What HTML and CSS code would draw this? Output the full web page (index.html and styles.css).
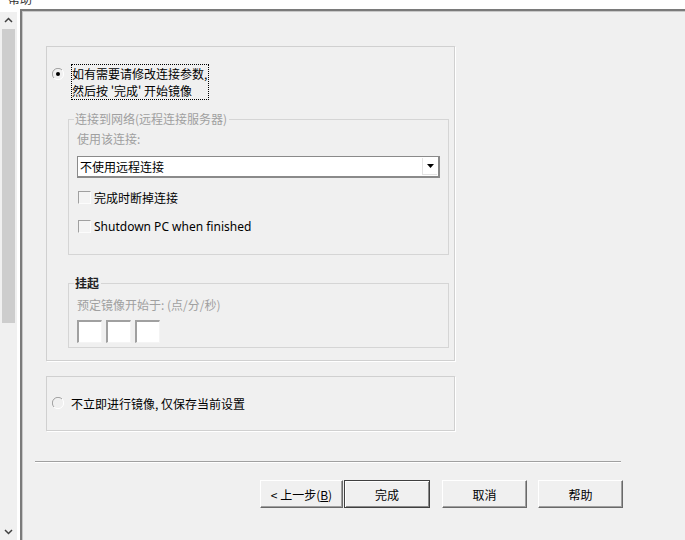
FILE: index.html
```html
<!DOCTYPE html>
<html lang="zh-CN">
<head>
    <meta charset="UTF-8">
    <title>帮助</title>
    <link rel="stylesheet" href="styles.css">
</head>
<body>
    <div class="header"><span class="header-title">帮助</span></div>

    <div class="main">
        <div class="scrollbar">
            <div class="scroll-arrow">
                <svg width="9" height="6" viewBox="0 0 9 6"><path d="M1 5 L4.5 1.5 L8 5" fill="none" stroke="#404040" stroke-width="1.5"/></svg>
            </div>
            <div class="scroll-track">
                <div class="scroll-thumb"></div>
            </div>
            <div class="scroll-arrow">
                <svg width="9" height="6" viewBox="0 0 9 6"><path d="M1 1 L4.5 4.5 L8 1" fill="none" stroke="#404040" stroke-width="1.5"/></svg>
            </div>
        </div>

        <div class="panel">
            <div class="group group-main">
                <div class="option-row">
                    <svg class="radio" width="12" height="12" viewBox="0 0 12 12">
                        <path d="M10 2 A5.5 5.5 0 0 0 2 10" fill="none" stroke="#a0a0a0" stroke-width="1"/>
                        <path d="M2 10 A5.5 5.5 0 0 0 10 2" fill="none" stroke="#ffffff" stroke-width="1"/>
                        <circle cx="6" cy="6" r="2" fill="#000"/>
                    </svg>
                    <div class="focus-label">如有需要请修改连接参数,<br>然后按 '完成' 开始镜像</div>
                </div>

                <fieldset class="subgroup net-group">
                    <legend class="legend-disabled">连接到网络(远程连接服务器)</legend>
                    <div class="field-label">使用该连接:</div>
                    <div class="combo">
                        <span class="combo-text">不使用远程连接</span>
                        <span class="combo-btn">
                            <svg width="7" height="4" viewBox="0 0 7 4"><path d="M0 0 H7 L3.5 4 Z" fill="#000"/></svg>
                        </span>
                    </div>
                    <div class="check-row first">
                        <span class="checkbox"></span>
                        <span>完成时断掉连接</span>
                    </div>
                    <div class="check-row">
                        <span class="checkbox"></span>
                        <span class="latin">Shutdown PC when finished</span>
                    </div>
                </fieldset>

                <fieldset class="subgroup hold-group">
                    <legend class="legend-bold">挂起</legend>
                    <div class="field-label">预定镜像开始于: (点/分/秒)</div>
                    <div class="time-boxes">
                        <span class="time-box"></span>
                        <span class="time-box"></span>
                        <span class="time-box"></span>
                    </div>
                </fieldset>
            </div>

            <div class="group group-save">
                <svg class="radio" width="12" height="12" viewBox="0 0 12 12">
                    <path d="M10 2 A5.5 5.5 0 0 0 2 10" fill="none" stroke="#a0a0a0" stroke-width="1"/>
                    <path d="M2 10 A5.5 5.5 0 0 0 10 2" fill="none" stroke="#ffffff" stroke-width="1"/>
                </svg>
                <span>不立即进行镜像, 仅保存当前设置</span>
            </div>

            <div class="separator"></div>

            <div class="buttons">
                <button class="btn btn-back">&lt;&nbsp;上一步(<u>B</u>)</button>
                <button class="btn btn-default">完成</button>
                <button class="btn btn-cancel">取消</button>
                <button class="btn btn-help">帮助</button>
            </div>
        </div>
    </div>
</body>
</html>
```

FILE: styles.css
```css
* {
    margin: 0;
    padding: 0;
    box-sizing: border-box;
}

body {
    width: 685px;
    height: 540px;
    overflow: hidden;
    background-color: #ffffff;
    color: #000;
    font-family: "Noto Sans CJK SC", "Noto Sans", sans-serif;
    font-size: 12px;
}

.header {
    height: 9px;
    overflow: hidden;
    padding-left: 8px;
}

.header-title {
    display: block;
    margin-top: -8px;
    line-height: 14px;
    color: #333;
}

.main {
    display: flex;
    height: 531px;
}

.scrollbar {
    width: 17px;
    margin-top: 3px;
    margin-right: 3px;
    display: flex;
    flex-direction: column;
    background-color: #f0f0f0;
}

.scroll-arrow {
    height: 16px;
    display: flex;
    align-items: center;
    justify-content: center;
}

.scroll-track {
    flex: 1;
    padding: 1px 2px 0 2px;
}

.scroll-thumb {
    height: 294px;
    background-color: #cdcdcd;
}

.panel {
    flex: 1;
    background-color: #f0f0f0;
    border-top: 2px solid #7a7a7a;
    border-left: 2px solid #7a7a7a;
    box-shadow: inset 1px 1px #c8c8c8;
    padding: 35px 0 0 24px;
}

.group {
    width: 409px;
    border: 1px solid #d0d0d0;
    box-shadow: 1px 1px #fff;
}

.group-main {
    height: 315px;
}

.option-row {
    display: flex;
    align-items: flex-start;
    margin-top: 17px;
    padding-left: 5px;
}

.radio {
    flex-shrink: 0;
}

.option-row .radio {
    margin-top: 4px;
    margin-right: 7px;
}

.focus-label {
    border: 1px dotted #000;
    padding: 0 1px 0 0;
    line-height: 17px;
}

.subgroup {
    width: 381px;
    margin-left: 21px;
    border: 1px solid #d5d5d5;
    padding: 0 8px;
    min-width: 0;
}

.subgroup legend {
    margin-left: -3px;
    padding: 0 2px 0 1px;
    line-height: 14px;
}

.legend-disabled {
    color: #a0a0a0;
}

.legend-bold {
    font-weight: bold;
    color: #222;
}

.net-group {
    margin-top: 12px;
    padding-bottom: 19px;
}

.field-label {
    color: #a0a0a0;
    line-height: 14px;
    margin-top: 6px;
}

.combo {
    display: flex;
    align-items: center;
    width: 363px;
    height: 22px;
    margin-top: 10px;
    background-color: #fff;
    border-top: 1px solid #8a8a8a;
    border-left: 1px solid #8a8a8a;
    border-right: 2px solid #8a8a8a;
    border-bottom: 2px solid #8a8a8a;
}

.combo-text {
    flex: 1;
    padding-left: 2px;
    line-height: 18px;
}

.combo-btn {
    width: 15px;
    height: 17px;
    margin-right: 1px;
    display: flex;
    align-items: center;
    justify-content: center;
    border-left: 1px solid #e3e3e3;
    border-bottom: 1px solid #e3e3e3;
}

.check-row {
    display: flex;
    align-items: center;
    height: 18px;
    margin-top: 11px;
    padding-left: 1px;
}

.check-row.first {
    margin-top: 10px;
}

.checkbox {
    width: 13px;
    height: 13px;
    margin-right: 3px;
    background-color: #f4f4f4;
    border-top: 1px solid #a0a0a0;
    border-left: 1px solid #a0a0a0;
    border-right: 1px solid #fcfcfc;
    border-bottom: 1px solid #fcfcfc;
}

.latin {
    font-family: "Noto Sans", sans-serif;
}

.hold-group {
    margin-top: 21px;
    padding-bottom: 4px;
}

.hold-group .field-label {
    margin-top: 8px;
}

.time-boxes {
    display: flex;
    gap: 4px;
    margin-top: 8px;
}

.time-box {
    width: 25px;
    height: 23px;
    background-color: #fff;
    border-top: 2px solid #a0a0a0;
    border-left: 2px solid #a0a0a0;
    border-right: 1px solid #f4f4f4;
    border-bottom: 1px solid #f4f4f4;
}

.group-save {
    height: 55px;
    margin-top: 15px;
    display: flex;
    align-items: center;
    padding-left: 5px;
    padding-bottom: 1px;
}

.group-save .radio {
    margin-right: 7px;
}

.separator {
    width: 586px;
    margin: 30px 0 0 -11px;
    border-top: 1px solid #a0a0a0;
    border-bottom: 1px solid #fff;
}

.buttons {
    display: flex;
    margin: 17px 0 0 214px;
}

.btn {
    height: 28px;
    font-family: "Noto Sans CJK SC", "Noto Sans", sans-serif;
    font-size: 12px;
    color: #000;
    background-color: #f0f0f0;
    border: 1px solid;
    border-color: #fff #696969 #696969 #fff;
    box-shadow: inset -1px -1px #a0a0a0;
}

.btn-back {
    width: 83px;
}

.btn-default {
    width: 86px;
    margin-left: 1px;
    border-color: #404040;
    box-shadow: inset 1px 1px #fff, inset -1px -1px #8a8a8a;
}

.btn-cancel {
    width: 85px;
    margin-left: 12px;
}

.btn-help {
    width: 85px;
    margin-left: 11px;
}
```
